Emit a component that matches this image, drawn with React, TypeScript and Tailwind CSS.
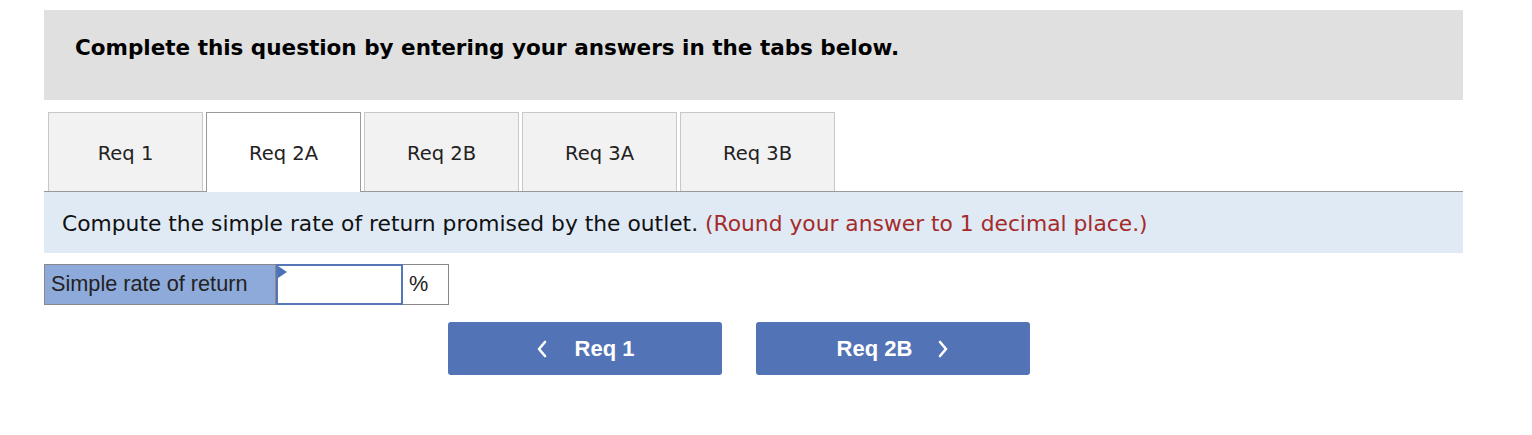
import React from "react";

const tabs = ["Req 1", "Req 2A", "Req 2B", "Req 3A", "Req 3B"];
const active = 1;

const App = () => {
  return (
    <div className="w-[1532px] h-[435px] bg-white pt-[10px] pl-[44px]" style={{ fontFamily: '"DejaVu Sans", Verdana, sans-serif' }}>
      <div className="w-[1419px]">
        {/* header */}
        <div className="h-[90px] bg-[#e0e0e0] pl-[31px] pt-[24px]">
          <h1 className="text-[21.5px] leading-[28px] font-bold text-black">
            Complete this question by entering your answers in the tabs below.
          </h1>
        </div>

        {/* tabs */}
        <div className="mt-[12px] flex gap-[3px] pl-[4px] border-b border-[#999]">
          {tabs.map((t, i) => (
            <div
              key={t}
              className={
                i === active
                  ? "w-[155px] h-[80px] -mb-px pt-[3px] pb-px flex items-center justify-center bg-white border border-[#9a9a9a] border-b-0 text-[19.5px] text-[#222]"
                  : "w-[155px] h-[79px] pt-[3px] flex items-center justify-center bg-[#f2f2f2] border border-[#c8c8c8] border-b-0 text-[19.5px] text-[#222]"
              }
            >
              {t}
            </div>
          ))}
        </div>

        {/* instructions */}
        <div className="h-[61px] bg-[#dfeaf5] flex items-center pl-[18px] pt-[3px] text-[21.8px] text-[#111]">
          <p>
            Compute the simple rate of return promised by the outlet.{" "}
            <span className="text-[#a52a2a]">(Round your answer to 1 decimal place.)</span>
          </p>
        </div>

        {/* answer row */}
        <div className="mt-[11px] flex h-[41px] w-[405px]" style={{ fontFamily: '"Liberation Sans", Arial, sans-serif' }}>
          <div className="w-[232px] bg-[#8eaadb] border border-[#888] flex items-center pl-[6px] text-[21.7px] text-[#222]">
            Simple rate of return
          </div>
          <div className="relative w-[127px] bg-white border-2 border-[#5577b8]">
            <span className="absolute left-0 top-0 w-0 h-0 border-t-[6px] border-b-[6px] border-l-[9px] border-t-transparent border-b-transparent border-l-[#4a70b8]" />
          </div>
          <div className="w-[46px] border border-[#888] border-l-0 flex items-center pl-[6px] text-[21.7px] text-[#222]">
            %
          </div>
        </div>

        {/* nav buttons */}
        <div className="mt-[17px] ml-[404px] flex gap-[34px]" style={{ fontFamily: '"Liberation Sans", Arial, sans-serif' }}>
          <button className="w-[274px] h-[53px] rounded-[3px] bg-[#5273b5] text-white font-bold text-[22px] flex items-center justify-center gap-[27px]">
            <svg width="12" height="20" viewBox="0 0 12 20" fill="none" stroke="white" strokeWidth="2.6" strokeLinecap="round" strokeLinejoin="round">
              <path d="M9 3 L3 10 L9 17" />
            </svg>
            <span>Req 1</span>
          </button>
          <button className="w-[274px] h-[53px] rounded-[3px] bg-[#5273b5] text-white font-bold text-[22px] flex items-center justify-center gap-[25px]">
            <span>Req 2B</span>
            <svg width="12" height="20" viewBox="0 0 12 20" fill="none" stroke="white" strokeWidth="2.6" strokeLinecap="round" strokeLinejoin="round">
              <path d="M3 3 L9 10 L3 17" />
            </svg>
          </button>
        </div>
      </div>
    </div>
  );
};

export default App;
